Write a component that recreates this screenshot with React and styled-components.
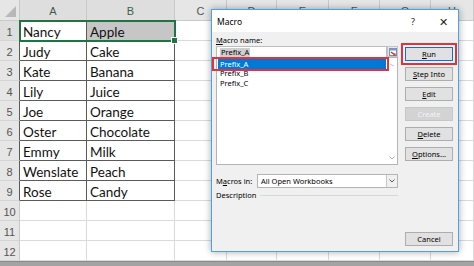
import React from 'react';
import styled, { createGlobalStyle } from 'styled-components';

const GlobalStyle = createGlobalStyle`
    html, body {
        margin: 0;
        padding: 0;
        background: #ffffff;
        overflow: hidden;
    }
`;

const Screen = styled.div`
    position: relative;
    width: 474px;
    height: 266px;
    overflow: hidden;
    background: #ffffff;
`;

const Sheet = styled.div`
    position: relative;
    display: grid;
    grid-template-columns: 20px 67px 88px 52px 50px 52px 51px 51px 43px;
    grid-template-rows: 21px repeat(12, 20px);
    font-family: "Lato", "Liberation Sans", sans-serif;
`;

const Corner = styled.div`
    position: relative;
    background: #e6e6e6;
    border-right: 1px solid #c9c9c9;
    border-bottom: 1px solid #c9c9c9;
    &::after {
        content: '';
        position: absolute;
        right: 3px;
        bottom: 3px;
        border-left: 11px solid transparent;
        border-bottom: 11px solid #b8b8b8;
    }
`;

const ColHead = styled.div`
    display: flex;
    align-items: center;
    justify-content: center;
    background: ${p => (p.$active ? '#dedede' : '#e6e6e6')};
    border-right: 1px solid #c9c9c9;
    border-bottom: 1px solid #c9c9c9;
    color: ${p => (p.$active ? '#3d5e4a' : '#555')};
    font-family: "Liberation Sans", sans-serif;
    font-size: 11px;
    padding-top: 2px;
    box-sizing: border-box;
`;

const RowHead = styled.div`
    display: flex;
    align-items: center;
    justify-content: center;
    background: ${p => (p.$active ? '#dedede' : '#e6e6e6')};
    border-right: 1px solid ${p => (p.$framed ? '#5a5a5a' : '#c9c9c9')};
    border-bottom: 1px solid #d4d4d4;
    color: ${p => (p.$active ? '#3d5e4a' : '#555')};
    font-family: "Liberation Sans", sans-serif;
    font-size: 11px;
    padding-top: 2px;
    box-sizing: border-box;
`;

const Cell = styled.div`
    display: flex;
    align-items: center;
    padding: 2px 0 0 3px;
    box-sizing: border-box;
    background: ${p => (p.$shaded ? '#c6c6c6' : '#ffffff')};
    border-right: 1px solid ${p => (p.$framed ? '#5a5a5a' : '#dadada')};
    border-bottom: 1px solid ${p => (p.$framed ? '#5a5a5a' : '#dadada')};
    font-size: 13.5px;
    color: #111;
    white-space: nowrap;
    overflow: hidden;
`;

const Selection = styled.div`
    position: absolute;
    left: 19px;
    top: 20px;
    width: 157px;
    height: 22px;
    border: 2px solid #217346;
    box-sizing: border-box;
    pointer-events: none;
    &::after {
        content: '';
        position: absolute;
        right: -4px;
        bottom: -4px;
        width: 5px;
        height: 5px;
        background: #217346;
        border: 1px solid #fff;
    }
`;

const StatusStrip = styled.div`
    height: 5px;
    background: #a3a3a3;
    border-top: 1px solid #8a8a8a;
`;

const Dialog = styled.div`
    position: absolute;
    left: 211px;
    top: 9px;
    width: 248px;
    height: 243px;
    box-sizing: border-box;
    border: 1px solid #4da3de;
    background: #f0f0f0;
    box-shadow: 0 0 7px rgba(0, 0, 0, 0.35);
    display: flex;
    flex-direction: column;
    font-family: "Noto Sans", "Open Sans", sans-serif;
    font-size: 7.5px;
    color: #000;
`;

const TitleBar = styled.div`
    height: 22px;
    display: flex;
    align-items: center;
    background: #ffffff;
    padding-left: 5px;
`;

const TitleText = styled.div`
    flex: 1;
    font-size: 8.5px;
`;

const TitleButton = styled.div`
    width: 30px;
    text-align: center;
    font-size: ${p => (p.$big ? '11px' : '9px')};
    color: #222;
`;

const Body = styled.div`
    flex: 1;
    display: flex;
    gap: 7px;
    padding: 3px 5px 5px 4px;
`;

const LeftCol = styled.div`
    width: 182px;
    display: flex;
    flex-direction: column;
`;

const RightCol = styled.div`
    width: 48px;
    display: flex;
    flex-direction: column;
    gap: 6px;
    padding-top: 12px;
`;

const Label = styled.div`
    height: 10px;
    line-height: 10px;
    white-space: nowrap;
    width: ${p => (p.$width ? `${p.$width}px` : 'auto')};
    flex-shrink: 0;
`;

const InputRow = styled.div`
    margin-top: 1px;
    height: 11px;
    display: flex;
`;

const Input = styled.div`
    flex: 1;
    background: #fff;
    border: 1px solid #bcbcbc;
    border-bottom: none;
    box-sizing: border-box;
    display: flex;
    align-items: center;
    padding-left: 3px;
`;

const SelectedText = styled.span`
    background: #cfcfcf;
    line-height: 9px;
    padding: 0 1px;
`;

const CollapseButton = styled.div`
    width: 11px;
    background: #e8e8e8;
    border: 1px solid #c4c4c4;
    box-sizing: border-box;
    display: flex;
    align-items: center;
    justify-content: center;
`;

const List = styled.div`
    position: relative;
    height: 108px;
    background: #fff;
    border: 1px solid #b4b4b4;
    box-sizing: border-box;
    padding: 1px 11px 0 1px;
`;

const ListItem = styled.div`
    position: relative;
    height: ${p => (p.$selected ? '10px' : '9.5px')};
    line-height: ${p => (p.$selected ? '10px' : '9.5px')};
    padding-left: 2px;
    background: ${p => (p.$selected ? '#0078d7' : 'transparent')};
    color: ${p => (p.$selected ? '#fff' : '#000')};
    &::before {
        content: '';
        display: ${p => (p.$selected ? 'block' : 'none')};
        position: absolute;
        left: -6px;
        right: -3px;
        top: -2px;
        bottom: -2px;
        border: 2px solid #e2333a;
    }
`;

const ScrollMark = styled.svg`
    position: absolute;
    right: 2px;
    top: ${p => (p.$top ? '5px' : 'auto')};
    bottom: ${p => (p.$top ? 'auto' : '4px')};
`;

const MacrosRow = styled.div`
    margin-top: 9px;
    height: 14px;
    display: flex;
    align-items: center;
`;

const Combo = styled.div`
    flex: 1;
    height: 14px;
    background: #fff;
    border: 1px solid #b4b4b4;
    box-sizing: border-box;
    display: flex;
    align-items: center;
    padding-left: 3px;
`;

const ComboText = styled.div`
    flex: 1;
`;

const ComboArrow = styled.div`
    width: 10px;
    height: 12px;
    border-left: 1px solid #c8c8c8;
    background: #f0f0f0;
    display: flex;
    align-items: center;
    justify-content: center;
`;

const DescRow = styled.div`
    margin-top: 2px;
    display: flex;
    align-items: center;
    gap: 4px;
`;

const Rule = styled.div`
    flex: 1;
    border-top: 1px solid #d8d8d8;
`;

const Button = styled.div`
    height: 14px;
    box-sizing: border-box;
    display: flex;
    align-items: center;
    justify-content: center;
    background: ${p => (p.$disabled ? '#d3d3d3' : '#e1e1e1')};
    border: 1px solid ${p => (p.$primary ? '#0078d7' : p.$disabled ? '#c6c6c6' : '#adadad')};
    color: ${p => (p.$disabled ? '#f4f4f4' : '#000')};
    outline: ${p => (p.$marked ? '2px solid #e2333a' : 'none')};
    outline-offset: 2px;
    margin-top: ${p => (p.$bottom ? 'auto' : '0')};
`;

const columns = ['', 'A', 'B', 'C', 'D', 'E', 'F', 'G', 'H'];
const names = ['Nancy', 'Judy', 'Kate', 'Lily', 'Joe', 'Oster', 'Emmy', 'Wenslate', 'Rose'];
const foods = ['Apple', 'Cake', 'Banana', 'Juice', 'Orange', 'Chocolate', 'Milk', 'Peach', 'Candy'];
const macros = ['Prefix_A', 'Prefix_B', 'Prefix_C'];

function App() {
    const rows = Array.from({ length: 12 }, (_, i) => i + 1);

    return (
        <Screen>
            <GlobalStyle />
            <Sheet>
                <Corner />
                {columns.slice(1).map(c => (
                    <ColHead key={c} $active={c === 'A' || c === 'B'}>{c}</ColHead>
                ))}
                {rows.map(r => {
                    const framed = r <= 9;
                    return (
                        <React.Fragment key={r}>
                            <RowHead $framed={framed} $active={r === 1}>{r}</RowHead>
                            <Cell $framed={framed}>{framed ? names[r - 1] : ''}</Cell>
                            <Cell $framed={framed} $shaded={r === 1}>{framed ? foods[r - 1] : ''}</Cell>
                            {columns.slice(3).map(c => <Cell key={c} />)}
                        </React.Fragment>
                    )
                })}
                <Selection />
            </Sheet>
            <StatusStrip />

            <Dialog>
                <TitleBar>
                    <TitleText>Macro</TitleText>
                    <TitleButton>?</TitleButton>
                    <TitleButton $big>✕</TitleButton>
                </TitleBar>
                <Body>
                    <LeftCol>
                        <Label><u>M</u>acro name:</Label>
                        <InputRow>
                            <Input><SelectedText>Prefix_A</SelectedText></Input>
                            <CollapseButton>
                                <svg width="8" height="8" viewBox="0 0 8 8">
                                    <rect x="0.5" y="0.5" width="7" height="7" fill="#fff" stroke="#7a8ea8" />
                                    <rect x="0.5" y="0.5" width="7" height="2" fill="#7a9cc6" />
                                    <path d="M2 4 L6 7 M4.5 7 H6 V5.5" stroke="#d0262b" strokeWidth="1.2" fill="none" />
                                </svg>
                            </CollapseButton>
                        </InputRow>
                        <List>
                            {macros.map((m, i) => (
                                <ListItem key={m} $selected={i === 0}>{m}</ListItem>
                            ))}
                            <ScrollMark $top width="6" height="4" viewBox="0 0 6 4">
                                <path d="M1 1 L5 3" stroke="#c4c4c4" fill="none" />
                            </ScrollMark>
                            <ScrollMark width="6" height="4" viewBox="0 0 6 4">
                                <path d="M0.5 0.5 L3 3 L5.5 0.5" stroke="#b0b0b0" fill="none" />
                            </ScrollMark>
                        </List>
                        <MacrosRow>
                            <Label $width={41}>M<u>a</u>cros in:</Label>
                            <Combo>
                                <ComboText>All Open Workbooks</ComboText>
                                <ComboArrow>
                                    <svg width="6" height="4" viewBox="0 0 6 4">
                                        <path d="M0.5 0.5 L3 3 L5.5 0.5" stroke="#555" fill="none" />
                                    </svg>
                                </ComboArrow>
                            </Combo>
                        </MacrosRow>
                        <DescRow>
                            <Label>Description</Label>
                            <Rule />
                        </DescRow>
                    </LeftCol>
                    <RightCol>
                        <Button $primary $marked><u>R</u>un</Button>
                        <Button><u>S</u>tep Into</Button>
                        <Button><u>E</u>dit</Button>
                        <Button $disabled>Create</Button>
                        <Button><u>D</u>elete</Button>
                        <Button><u>O</u>ptions...</Button>
                        <Button $bottom>Cancel</Button>
                    </RightCol>
                </Body>
            </Dialog>
        </Screen>
    )
}

export default App;
